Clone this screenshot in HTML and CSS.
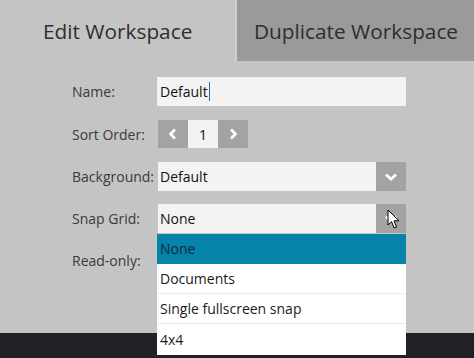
FILE: index.html
```html
<!DOCTYPE html>
<html>
<head>
<meta charset="utf-8">
<link rel="stylesheet" href="styles.css">
</head>
<body>
<div class="page">
  <div class="tabs">
    <div class="tab tab-active">Edit Workspace</div>
    <div class="tab tab-inactive">Duplicate Workspace</div>
  </div>
  <div class="form">
    <div class="row row-name">
      <div class="label">Name:</div>
      <div class="input"><span>Default</span><span class="caret"></span></div>
    </div>
    <div class="row row-sort">
      <div class="label">Sort Order:</div>
      <div class="stepper">
        <div class="step-btn"><svg width="12" height="12" viewBox="0 0 12 12"><path d="M8 1.5 L3.5 6 L8 10.5" fill="none" stroke="#fff" stroke-width="2.6"/></svg></div>
        <div class="step-val">1</div>
        <div class="step-btn"><svg width="12" height="12" viewBox="0 0 12 12"><path d="M4 1.5 L8.5 6 L4 10.5" fill="none" stroke="#fff" stroke-width="2.6"/></svg></div>
      </div>
    </div>
    <div class="row row-bg">
      <div class="label">Background:</div>
      <div class="select">
        <div class="select-text">Default</div>
        <div class="select-btn"><svg width="14" height="10" viewBox="0 0 14 10"><path d="M2 2.5 L7 7.2 L12 2.5" fill="none" stroke="#fff" stroke-width="2.8"/></svg></div>
      </div>
    </div>
    <div class="row row-snap">
      <div class="label">Snap Grid:</div>
      <div class="select select-open">
        <div class="select-text">None</div>
        <div class="select-btn"><svg width="14" height="10" viewBox="0 0 14 10"><path d="M2 2.5 L7 7.2 L12 2.5" fill="none" stroke="#fff" stroke-width="2.8"/></svg></div>
        <svg class="pointer" width="14" height="21" viewBox="0 0 14 21"><path d="M1 1 L1 16 L4.5 12.6 L7.2 19 L9.6 18 L7 11.8 L12 11.8 Z" fill="#fff" stroke="#000" stroke-width="1" stroke-linejoin="round"/></svg>
        <div class="menu">
          <div class="item item-sel">None</div>
          <div class="item">Documents</div>
          <div class="item">Single fullscreen snap</div>
          <div class="item">4x4</div>
        </div>
      </div>
    </div>
    <div class="row row-ro">
      <div class="label">Read-only:</div>
    </div>
  </div>
  <div class="footer"></div>
</div>
</body>
</html>
```
FILE: styles.css
```css
html, body {
  margin: 0;
  padding: 0;
}
body {
  background: #c4c4c4;
  font-family: "Open Sans", "Noto Sans", sans-serif;
  color: #333;
  width: 474px;
  height: 358px;
  overflow: hidden;
}
.page {
  display: flex;
  flex-direction: column;
  height: 358px;
}
.tabs {
  display: flex;
  height: 61px;
}
.tab {
  height: 61px;
  display: flex;
  align-items: center;
  font-size: 20.8px;
  color: #2e2e2e;
  box-sizing: border-box;
  white-space: nowrap;
  overflow: hidden;
}
.tab-active {
  width: 237px;
  background: #c4c4c4;
  border-right: 2px solid #cfcfcf;
  padding-left: 43px;
}
.tab-inactive {
  width: 237px;
  background: #9a9a9a;
  padding-left: 17px;
}
.form {
  flex: 1;
  padding: 16px 0 0 72px;
  display: flex;
  flex-direction: column;
}
.row {
  display: flex;
  align-items: center;
  height: 29px;
  margin-bottom: 13px;
}
.row-name { margin-bottom: 14px; }
.row-sort { height: 28px; margin-bottom: 14px; }
.label {
  width: 85px;
  font-size: 14px;
  color: #3a3a3a;
  white-space: nowrap;
  overflow: hidden;
  flex-shrink: 0;
}
.input {
  width: 249px;
  height: 29px;
  background: #f3f3f3;
  display: flex;
  align-items: center;
  padding-left: 3px;
  box-sizing: border-box;
  font-size: 14px;
  color: #111;
}
.caret {
  display: inline-block;
  width: 1px;
  height: 19px;
  background: #1a6fb0;
  margin-left: 1px;
}
.stepper {
  display: flex;
  height: 28px;
  margin-left: 1px;
}
.step-btn {
  width: 30px;
  height: 28px;
  background: #a3a3a3;
  display: flex;
  align-items: center;
  justify-content: center;
}
.step-val {
  width: 30px;
  height: 28px;
  background: #f3f3f3;
  display: flex;
  align-items: center;
  justify-content: center;
  font-size: 14px;
  color: #111;
}
.select {
  position: relative;
  display: flex;
  width: 248px;
  height: 29px;
  margin-left: 1px;
}
.select-text {
  flex: 1;
  background: #f3f3f3;
  display: flex;
  align-items: center;
  padding-left: 2px;
  font-size: 14px;
  color: #111;
}
.select-btn {
  width: 30px;
  background: #a3a3a3;
  display: flex;
  align-items: center;
  justify-content: center;
}
.pointer {
  position: absolute;
  left: 229px;
  top: 5px;
}
.menu {
  position: absolute;
  left: -1px;
  top: 30px;
  width: 249px;
  background: #fff;
  z-index: 2;
}
.item {
  height: 30px;
  display: flex;
  align-items: center;
  padding-left: 3px;
  font-size: 14px;
  color: #1a1a1a;
  border-bottom: 1px solid #ececec;
  box-sizing: border-box;
}
.item:last-child { border-bottom: none; height: 31px; }
.item-sel {
  background: #0583a8;
  color: #0e2a3a;
  border-bottom-color: #0583a8;
}
.footer {
  height: 25px;
  background: #202124;
}
```
